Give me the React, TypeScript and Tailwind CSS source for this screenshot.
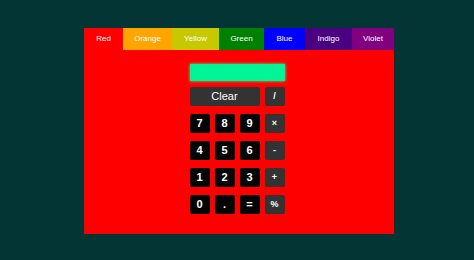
const tabs = [
  { name: "Red", cls: "w-[39px] bg-[#ff0000]" },
  { name: "Orange", cls: "w-[49px] bg-[#ffa500]" },
  { name: "Yellow", cls: "w-[47px] bg-[#c8c800]" },
  { name: "Green", cls: "w-[45px] bg-[#008000]" },
  { name: "Blue", cls: "w-[41px] bg-[#0000ff]" },
  { name: "Indigo", cls: "w-[47px] bg-[#4b0082]" },
  { name: "Violet", cls: "w-[42px] bg-[#800080]" },
];

const rows = [
  ["7", "8", "9", "×"],
  ["4", "5", "6", "-"],
  ["1", "2", "3", "+"],
  ["0", ".", "=", "%"],
];

export default function App() {
  return (
    <div
      className="min-h-screen w-full bg-[#033535] flex items-center justify-center"
      style={{ fontFamily: '"Liberation Sans", Arial, sans-serif' }}
    >
      <div className="w-[310px] bg-[#ff0000] mt-[2px] ml-[4px]">
        {/* tabs */}
        <div className="flex h-[22px]">
          {tabs.map((t) => (
            <div
              key={t.name}
              className={`${t.cls} flex items-center justify-center text-[8px] text-white`}
            >
              {t.name}
            </div>
          ))}
        </div>

        {/* calculator */}
        <div className="flex justify-center pt-[14px] pb-[20px] pr-[4px]">
          <div className="w-[95px]">
            <div className="h-[17px] w-full bg-[#00f596] shadow-[0_0_3px_#22ff99]"></div>
            <div className="grid grid-cols-4 gap-x-[5px] gap-y-[8px] mt-[6px]">
              <button className="col-span-3 h-[19px] rounded-[2px] bg-[#333333] text-white text-[11px]">
                Clear
              </button>
              <button className="h-[19px] rounded-[2px] bg-[#333333] text-white text-[9px] font-bold">
                /
              </button>
              {rows.map((r) =>
                r.map((k, i) => (
                  <button
                    key={k}
                    className={`h-[19px] rounded-[2px] text-white font-semibold ${
                      i === 3 ? "bg-[#333333] text-[9px]" : "bg-[#050505] text-[11px]"
                    }`}
                  >
                    {k}
                  </button>
                ))
              )}
            </div>
          </div>
        </div>
      </div>
    </div>
  );
}
